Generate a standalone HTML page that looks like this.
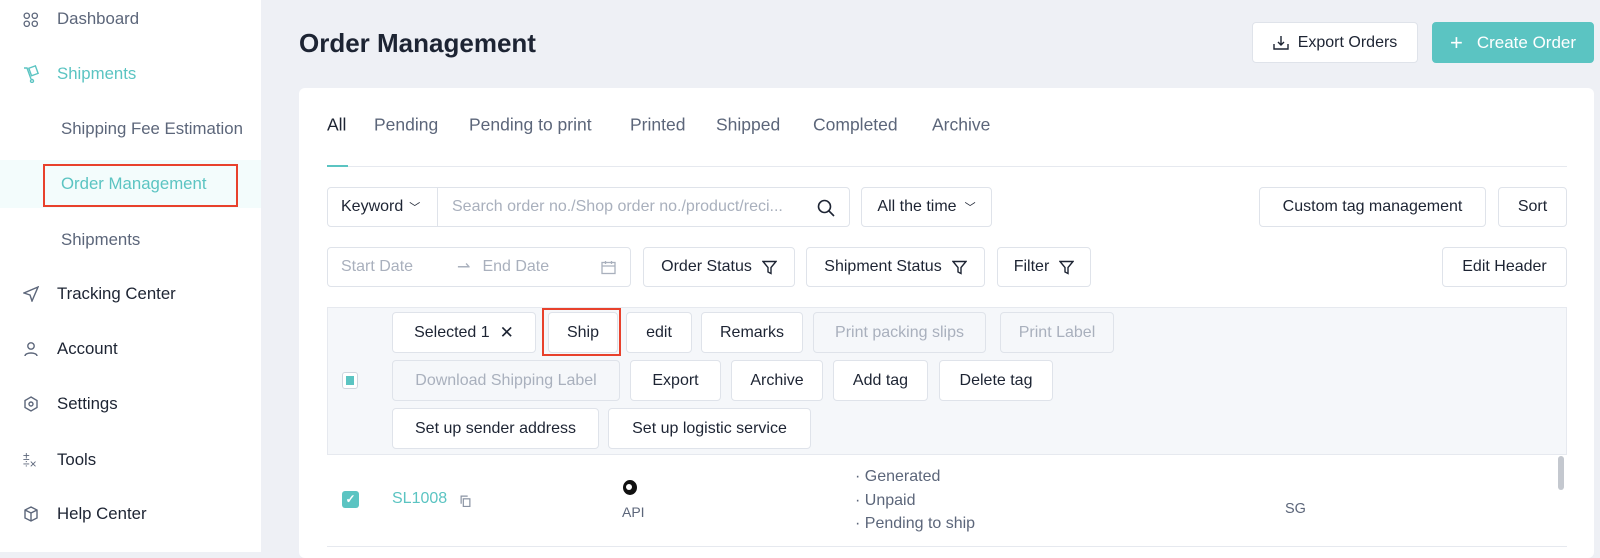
<!DOCTYPE html>
<html><head><meta charset="utf-8"><style>
*{box-sizing:border-box;margin:0;padding:0}
body{width:1600px;height:552px;overflow:hidden;background:#eef0f5;font-family:"Liberation Sans",sans-serif;position:relative;color:#1d2433}
.a{position:absolute}
.side{left:0;top:0;width:261px;height:552px;background:#fff}
.si{position:absolute;left:57px;font-size:16.8px;transform:translateY(-50%);white-space:nowrap;color:#1d2433}
.ic{position:absolute;left:23px;transform:translateY(-50%)}
.btn{position:absolute;border:1px solid #dfe3ea;border-radius:4px;background:#fff;font-size:16px;color:#1d2433;display:flex;align-items:center;justify-content:center;white-space:nowrap}
.dis{background:#f5f7fa;color:#a9b0bd}
.tab{position:absolute;top:125px;transform:translateY(-50%);font-size:17.5px;color:#5c667a;white-space:nowrap}
</style></head><body>
<div class="a side">
 <svg class="ic" style="top:20px" width="16" height="16" viewBox="0 0 17 17" fill="none" stroke="#5c667a" stroke-width="1.4"><circle cx="4" cy="4" r="2.8"/><circle cx="12.5" cy="4" r="2.8"/><circle cx="4" cy="12.5" r="2.8"/><circle cx="12.5" cy="12.5" r="2.8"/></svg>
 <div class="si" style="top:19px;color:#5c667a">Dashboard</div>
 <svg class="ic" style="top:74px" width="18" height="18" viewBox="0 0 18 18" fill="none" stroke="#5bc4c2" stroke-width="1.4"><path d="M1 3h3l4 11"/><rect x="7" y="2" width="7" height="8" transform="rotate(-20 10 6)"/><circle cx="9" cy="16" r="1.5"/></svg>
 <div class="si" style="top:74px;color:#5bc4c2">Shipments</div>
 <div class="si" style="top:129px;left:61px;color:#5c667a">Shipping Fee Estimation</div>
 <div class="a" style="left:0;top:160px;width:261px;height:48px;background:#f3fcfc"></div>
 <div class="a" style="left:43px;top:164px;width:195px;height:43px;border:2px solid #e8412c"></div>
 <div class="si" style="top:184px;left:61px;color:#5bc4c2">Order Management</div>
 <div class="si" style="top:240px;left:61px;color:#5c667a">Shipments</div>
 <svg class="ic" style="top:294px" width="16" height="16" viewBox="0 0 16 16" fill="none" stroke="#5c667a" stroke-width="1.4"><path d="M15 1L1 7l6 2 2 6z"/></svg>
 <div class="si" style="top:294px">Tracking Center</div>
 <svg class="ic" style="top:349px" width="16" height="16" viewBox="0 0 16 16" fill="none" stroke="#5c667a" stroke-width="1.4"><circle cx="8" cy="5" r="3.2"/><path d="M2 15c0-4 12-4 12 0"/></svg>
 <div class="si" style="top:349px">Account</div>
 <svg class="ic" style="top:404px" width="16" height="16" viewBox="0 0 16 16" fill="none" stroke="#5c667a" stroke-width="1.4"><path d="M8 1l6 3.5v7L8 15l-6-3.5v-7z"/><circle cx="8" cy="8" r="2"/></svg>
 <div class="si" style="top:404px">Settings</div>
 <div class="ic" style="top:460px;font-size:12px;color:#5c667a;line-height:8px">±<br>÷×</div>
 <div class="si" style="top:460px">Tools</div>
 <svg class="ic" style="top:514px" width="16" height="16" viewBox="0 0 16 16" fill="none" stroke="#5c667a" stroke-width="1.4"><path d="M8 1l6 3v8l-6 3-6-3V4zM2 4l6 3 6-3M8 7v8"/></svg>
 <div class="si" style="top:514px">Help Center</div>
</div>

<div class="a" style="left:299px;top:28px;font-size:26px;font-weight:bold;color:#1d2433">Order Management</div>
<div class="btn" style="left:1252px;top:22px;width:166px;height:41px;font-size:16px"><svg width="16" height="16" viewBox="0 0 16 16" fill="none" stroke="#1d2433" stroke-width="1.4" style="margin-right:9px"><path d="M8 1v9M5 7l3 3 3-3M1 9v5h14V9"/></svg>Export Orders</div>
<div class="btn" style="left:1432px;top:22px;width:162px;height:41px;background:#5bc4c2;border-color:#5bc4c2;color:#fff;font-size:17px"><span style="font-size:22px;margin-right:14px;font-weight:300">+</span>Create Order</div>

<div class="a" style="left:299px;top:88px;width:1295px;height:470px;background:#fff;border-radius:6px"></div>
<div class="tab" style="left:327px;color:#1d2433">All</div>
<div class="tab" style="left:374px">Pending</div>
<div class="tab" style="left:469px">Pending to print</div>
<div class="tab" style="left:630px">Printed</div>
<div class="tab" style="left:716px">Shipped</div>
<div class="tab" style="left:813px">Completed</div>
<div class="tab" style="left:932px">Archive</div>
<div class="a" style="left:327px;top:166px;width:1240px;height:1px;background:#e6e9ef"></div>
<div class="a" style="left:327px;top:165px;width:21px;height:2px;background:#5bc4c2"></div>

<div class="btn" style="left:327px;top:187px;width:523px;height:40px;justify-content:flex-start">
 <div style="width:110px;height:100%;border-right:1px solid #dfe3ea;display:flex;align-items:center;padding-left:13px">Keyword <span style="font-size:11px;margin-left:6px">﹀</span></div>
 <div style="padding-left:14px;color:#a9b0bd">Search order no./Shop order no./product/reci...</div>
 <svg style="position:absolute;right:14px;top:11px" width="18" height="18" viewBox="0 0 18 18" fill="none" stroke="#1d2433" stroke-width="1.6"><circle cx="7.5" cy="7.5" r="6"/><path d="M12 12l5 5"/></svg>
</div>
<div class="btn" style="left:861px;top:187px;width:131px;height:40px">All the time <span style="font-size:11px;margin-left:8px">﹀</span></div>
<div class="btn" style="left:1259px;top:187px;width:227px;height:40px">Custom tag management</div>
<div class="btn" style="left:1498px;top:187px;width:69px;height:40px">Sort</div>

<div class="btn" style="left:327px;top:247px;width:304px;height:40px;justify-content:flex-start;color:#a9b0bd;padding-left:13px">Start Date<span style="margin-left:44px">⇀</span><span style="margin-left:12px">End Date</span>
 <svg style="position:absolute;right:14px;top:12px" width="15" height="15" viewBox="0 0 15 15" fill="none" stroke="#a9b0bd" stroke-width="1.3"><rect x="1" y="2.5" width="13" height="11"/><path d="M1 6h13M4.5 1v3M10.5 1v3"/></svg></div>
<div class="btn" style="left:643px;top:247px;width:152px;height:40px">Order Status<svg style="margin-left:10px" width="15" height="15" viewBox="0 0 15 15" fill="none" stroke="#1d2433" stroke-width="1.4"><path d="M1 1.5h13l-5 6v6l-3-1.5v-4.5z"/></svg></div>
<div class="btn" style="left:806px;top:247px;width:179px;height:40px">Shipment Status<svg style="margin-left:10px" width="15" height="15" viewBox="0 0 15 15" fill="none" stroke="#1d2433" stroke-width="1.4"><path d="M1 1.5h13l-5 6v6l-3-1.5v-4.5z"/></svg></div>
<div class="btn" style="left:997px;top:247px;width:94px;height:40px">Filter<svg style="margin-left:10px" width="15" height="15" viewBox="0 0 15 15" fill="none" stroke="#1d2433" stroke-width="1.4"><path d="M1 1.5h13l-5 6v6l-3-1.5v-4.5z"/></svg></div>
<div class="btn" style="left:1442px;top:247px;width:125px;height:40px">Edit Header</div>

<div class="a" style="left:327px;top:307px;width:1240px;height:147px;background:#f5f7fa;border:1px solid #e6e9ef;border-bottom:none"></div>
<div class="a" style="left:342px;top:372px;width:16px;height:17px;border:1px solid #cfd5de;border-radius:3px;background:#fff"><div style="margin:3px;width:8px;height:9px;background:#5bc4c2"></div></div>
<div class="btn" style="left:392px;top:312px;width:144px;height:41px">Selected 1 <span style="margin-left:10px;font-size:17px">✕</span></div>
<div class="a" style="left:542px;top:308px;width:79px;height:48px;border:2px solid #e8412c"></div>
<div class="btn" style="left:548px;top:312px;width:70px;height:41px">Ship</div>
<div class="btn" style="left:626px;top:312px;width:66px;height:41px">edit</div>
<div class="btn" style="left:701px;top:312px;width:102px;height:41px">Remarks</div>
<div class="btn dis" style="left:813px;top:312px;width:173px;height:41px">Print packing slips</div>
<div class="btn dis" style="left:1000px;top:312px;width:114px;height:41px">Print Label</div>
<div class="btn dis" style="left:392px;top:360px;width:228px;height:41px">Download Shipping Label</div>
<div class="btn" style="left:630px;top:360px;width:91px;height:41px">Export</div>
<div class="btn" style="left:731px;top:360px;width:92px;height:41px">Archive</div>
<div class="btn" style="left:833px;top:360px;width:95px;height:41px">Add tag</div>
<div class="btn" style="left:939px;top:360px;width:114px;height:41px">Delete tag</div>
<div class="btn" style="left:392px;top:408px;width:207px;height:41px">Set up sender address</div>
<div class="btn" style="left:608px;top:408px;width:203px;height:41px">Set up logistic service</div>

<div class="a" style="left:327px;top:454px;width:1240px;height:1px;background:#e6e9ef"></div>
<div class="a" style="left:327px;top:546px;width:1240px;height:1px;background:#e6e9ef"></div>
<div class="a" style="left:342px;top:491px;width:17px;height:17px;border-radius:3px;background:#5bc4c2;color:#fff;font-size:12px;text-align:center;line-height:17px;font-weight:bold">✓</div>
<div class="a" style="left:392px;top:490px;font-size:16px;color:#5bc4c2">SL1008</div>
<svg class="a" style="left:460px;top:495px" width="11" height="12" viewBox="0 0 10 11" fill="none" stroke="#8a93a3" stroke-width="1.1"><rect x="3" y="3.5" width="6" height="7"/><path d="M1 8V1h6"/></svg>
<div class="a" style="left:623px;top:480px;width:14px;height:15px;border-radius:50%;background:#111;border:2px solid #111"><div style="width:6px;height:6px;background:#fff;border-radius:50%;margin:2px 0 0 1px"></div></div>
<div class="a" style="left:622px;top:504px;font-size:14px;color:#5c667a">API</div>
<div class="a" style="left:855px;top:465px;font-size:16px;color:#5c667a;line-height:23.5px">· Generated<br>· Unpaid<br>· Pending to ship</div>
<div class="a" style="left:1285px;top:501px;font-size:14.5px;color:#5c667a">SG</div>
<div class="a" style="left:1558px;top:456px;width:6px;height:34px;border-radius:3px;background:#c4c8cf"></div>
</body></html>
